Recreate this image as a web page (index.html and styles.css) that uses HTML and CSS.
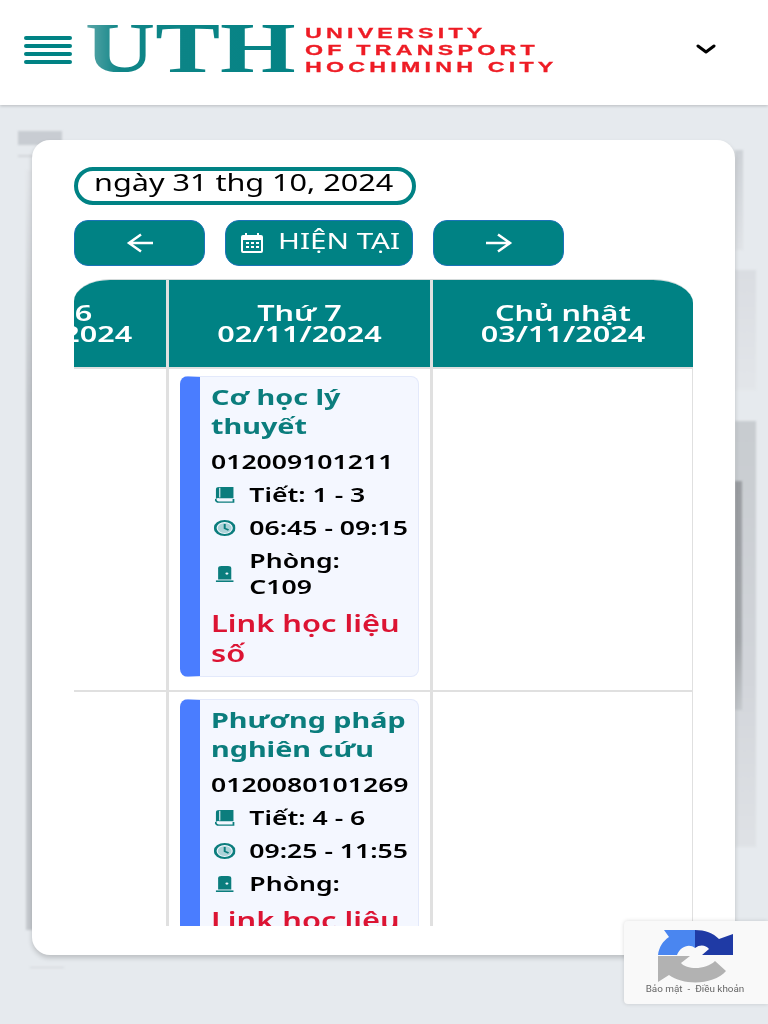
FILE: index.html
```html
<!DOCTYPE html>
<html>
<head>
<meta charset="UTF-8">
<title>Lịch học</title>
<link rel="stylesheet" href="styles.css">
</head>
<body>

<!-- thanh tren cung -->
<header class="topBar">
	<div class="menuBtn"><span></span><span></span><span></span><span></span></div>
	<div class="logo">
		<div class="logoMark">UTH</div>
		<div class="logoName">
			<div>UNIVERSITY</div>
			<div>OF TRANSPORT</div>
			<div>HOCHIMINH CITY</div>
		</div>
	</div>
	<svg class="chevron" width="20" height="10" viewBox="0 0 20 10"><path d="M2 2 L10 8 L18 2" fill="none" stroke="#000" stroke-width="3" stroke-linecap="round" stroke-linejoin="round"/></svg>
</header>

<!-- nen mo phia sau -->
<div class="blur blurA"></div>
<div class="blur blurB"></div>
<div class="blur blurC"></div>
<div class="blur blurD"></div>
<div class="blur blurE"></div>
<div class="blur blurF"></div>
<div class="blur blurG"></div>
<div class="blur blurH"></div>

<main class="panel">
	<div class="dateBox"><span class="dateText">ngày 31 thg 10, 2024</span></div>

	<div class="navRow">
		<button class="navBtn">
			<svg width="28" height="20" viewBox="0 0 28 20"><path d="M27 10 H3 M15 1.5 L3 10 L15 18.5" fill="none" stroke="#fff" stroke-width="2.5"/></svg>
		</button>
		<button class="navBtn todayBtn">
			<svg width="24" height="20" viewBox="0 0 24 20"><path fill="#fff" d="M5 0h2v2h10V0h2v2h2a2 2 0 0 1 2 2v14a2 2 0 0 1-2 2H3a2 2 0 0 1-2-2V4a2 2 0 0 1 2-2h2z"/><path fill="#008284" d="M3 7h18v11H3z"/><path fill="#fff" d="M6 9h3v2H6zM11 9h3v2h-3zM16 9h3v2h-3zM6 13h3v2H6zM11 13h3v2h-3zM16 13h3v2h-3z"/></svg>
			<span class="todayText">HIỆN TẠI</span>
		</button>
		<button class="navBtn">
			<svg width="28" height="20" viewBox="0 0 28 20"><path d="M1 10 H25 M13 1.5 L25 10 L13 18.5" fill="none" stroke="#fff" stroke-width="2.5"/></svg>
		</button>
	</div>

	<div class="tableWrap">
		<div class="week">
			<div class="dayHead"><div class="headText">Thứ 6<br>01/11/2024</div></div>
			<div class="dayHead"><div class="headText">Thứ 7<br>02/11/2024</div></div>
			<div class="dayHead lastCol"><div class="headText">Chủ nhật<br>03/11/2024</div></div>

			<div class="cell"></div>
			<div class="cell">
				<div class="lesson">
					<div class="lessonBody">
						<div class="subject">Cơ học lý<br>thuyết</div>
						<div class="code">012009101211</div>
						<div class="info">
							<svg class="ico" viewBox="0 0 20 20" preserveAspectRatio="none"><use href="#icoBook"/></svg>
							<span>Tiết: 1 - 3</span>
						</div>
						<div class="info">
							<svg class="ico" viewBox="0 0 20 20" preserveAspectRatio="none"><use href="#icoClock"/></svg>
							<span>06:45 - 09:15</span>
						</div>
						<div class="info">
							<svg class="ico" viewBox="0 0 20 20" preserveAspectRatio="none"><use href="#icoDoor"/></svg>
							<span>Phòng:<br>C109</span>
						</div>
						<div class="docLink">Link học liệu<br>số</div>
					</div>
				</div>
			</div>
			<div class="cell lastCol"></div>

			<div class="cell noLine"></div>
			<div class="cell noLine">
				<div class="lesson">
					<div class="lessonBody">
						<div class="subject">Phương pháp<br>nghiên cứu</div>
						<div class="code">0120080101269</div>
						<div class="info">
							<svg class="ico" viewBox="0 0 20 20" preserveAspectRatio="none"><use href="#icoBook"/></svg>
							<span>Tiết: 4 - 6</span>
						</div>
						<div class="info">
							<svg class="ico" viewBox="0 0 20 20" preserveAspectRatio="none"><use href="#icoClock"/></svg>
							<span>09:25 - 11:55</span>
						</div>
						<div class="info">
							<svg class="ico" viewBox="0 0 20 20" preserveAspectRatio="none"><use href="#icoDoor"/></svg>
							<span>Phòng:</span>
						</div>
						<div class="docLink">Link học liệu<br>số</div>
					</div>
				</div>
			</div>
			<div class="cell lastCol noLine"></div>
		</div>
	</div>
</main>

<!-- recaptcha -->
<div class="captcha">
	<svg class="captchaLogo" width="76" height="53" viewBox="0 0 76 53">
		<path fill="#4a86f0" d="M0 25 C1 17 5 11 11 7 L6 0 H37 V18 C31 13 22 17 19 25 Z"/>
		<path fill="#1f3aa5" d="M37 0 C47 0 55 3 61 9 L75 4 V25 H44 L51 19 C48 15 42 14 37 18 Z"/>
		<path fill="#b2b2b2" d="M0 26 H32 L23 33 C29 40 48 40 57 31 L68 41 C56 55 26 56 11 45 L0 52 Z"/>
	</svg>
	<div class="captchaText">Bảo mật &nbsp;-&nbsp; Điều khoản</div>
</div>

<svg class="iconDefs" width="0" height="0">
	<symbol id="icoBook" viewBox="0 0 20 20" preserveAspectRatio="none"><path fill="#0b7d7d" d="M5 0h13v14H5a3 3 0 0 0-3 1V3a3 3 0 0 1 3-3z"/><path fill="none" stroke="#0b7d7d" stroke-width="1.6" d="M2 15a3 3 0 0 0 3 4h13v-4"/><path fill="#f4f7ff" d="M5 1h1v12H5z"/></symbol>
	<symbol id="icoClock" viewBox="0 0 20 20" preserveAspectRatio="none"><circle cx="10" cy="10" r="10" fill="#0b7d7d"/><circle cx="10" cy="10" r="7.4" fill="#f4f7ff"/><circle cx="10" cy="10" r="6.4" fill="#0b7d7d" opacity=".3"/><path fill="none" stroke="#0b7d7d" stroke-width="1.8" d="M10 5v5.5l3.5 2"/></symbol>
	<symbol id="icoDoor" viewBox="0 0 20 20" preserveAspectRatio="none"><path fill="#0b7d7d" d="M4 17V3a3 3 0 0 1 3-3h6a3 3 0 0 1 3 3v14z"/><rect x="2" y="18" width="16" height="2" fill="#0b7d7d"/><circle cx="12" cy="9.5" r="1.4" fill="#f4f7ff"/></symbol>
</svg>

</body>
</html>
```

FILE: styles.css
```css
/* co ban */
html, body {
	margin: 0;
	padding: 0;
	width: 768px;
	height: 1024px;
	overflow: hidden;
}
body {
	position: relative;
	background: #e6eaee;
	font-family: "Noto Sans", sans-serif;
	color: #000;
}

/* thanh tren */
.topBar {
	display: flex;
	align-items: center;
	height: 105px;
	padding: 0 52px 10px 24px;
	box-sizing: border-box;
	background: #fff;
	box-shadow: 0 1px 3px rgba(0,0,0,.2);
	position: relative;
	z-index: 2;
}
.menuBtn {
	display: flex;
	flex-direction: column;
	gap: 4px;
	width: 48px;
	margin-top: 5px;
}
.menuBtn span {
	display: block;
	height: 4px;
	border-radius: 2px;
	background: #008284;
}
.logo {
	flex: 1;
	display: flex;
	align-items: center;
	gap: 10px;
	margin-left: 15px;
}
.logoMark {
	width: 208px;
	height: 48px;
	margin-left: -2px;
	margin-right: 2px;
	line-height: 48px;
	font-family: "Liberation Serif", serif;
	font-weight: bold;
	font-size: 71px;
	white-space: nowrap;
	transform: scaleX(1.37);
	transform-origin: left;
	background: linear-gradient(90deg, #5fa8aa 0%, #0f8587 12%, #008284 100%);
	-webkit-background-clip: text;
	background-clip: text;
	color: transparent;
}
.logoName {
	margin-top: 4px;
	font-family: "Liberation Sans", sans-serif;
	font-weight: bold;
	font-size: 15.5px;
	line-height: 17px;
	letter-spacing: 2.8px;
	-webkit-text-stroke: .3px #ee1c25;
	color: #ee1c25;
	transform: scaleX(1.5);
	transform-origin: left;
	white-space: nowrap;
}
.chevron {
	margin-top: 2px;
}

/* nen mo */
.blur {
	position: absolute;
	filter: blur(1px);
}
.blurA { left: 18px; top: 131px; width: 44px; height: 14px; background: #c8ccd2; }
.blurB { left: 26px; top: 170px; width: 8px; height: 760px; background: linear-gradient(#e3e6ea, #c5c9ce 30%, #c5c9ce 99%); }
.blurC { left: 735px; top: 150px; width: 8px; height: 100px; background: linear-gradient(#cdd1d6, #e0e3e7); }
.blurD { left: 735px; top: 270px; width: 21px; height: 120px; background: linear-gradient(#dadde2, #e3e6ea); }
.blurE { left: 735px; top: 421px; width: 21px; height: 426px; background: linear-gradient(#c8ccd0, #d2d5da 60%, #dfe2e6); }
.blurF { left: 735px; top: 481px; width: 7px; height: 229px; background: linear-gradient(#9a9da1, #a3a6aa 70%, #c4c8cc); }
.blurG { left: 18px; top: 155px; width: 16px; height: 2px; background: #d3d6da; }
.blurH { left: 30px; top: 967px; width: 34px; height: 1px; background: #d3d6da; }

/* khung chinh */
.panel {
	position: absolute;
	left: 32px;
	top: 140px;
	width: 703px;
	height: 815px;
	box-sizing: border-box;
	padding: 27px 42px 29px;
	background: #fff;
	border-radius: 18px;
	box-shadow: 0 3px 5px rgba(0,0,0,.18);
	display: flex;
	flex-direction: column;
	z-index: 1;
}
.dateBox {
	align-self: flex-start;
	width: 342px;
	height: 38px;
	box-sizing: border-box;
	border: 4px solid #008284;
	border-radius: 19px;
	padding-left: 16px;
	font-size: 23px;
	line-height: 22px;
	white-space: nowrap;
}
.dateText {
	display: inline-block;
	transform: scaleX(1.33);
	transform-origin: left;
}

/* nut */
.navRow {
	display: flex;
	gap: 20px;
	margin-top: 15px;
}
.navBtn {
	display: flex;
	align-items: center;
	justify-content: center;
	gap: 14px;
	width: 131px;
	height: 46px;
	padding: 0;
	border: 1px solid #1a73b8;
	border-radius: 14px;
	background: #008284;
	color: #fff;
	font-family: inherit;
	font-size: 21px;
}
.todayBtn {
	width: 188px;
}
.todayText {
	width: 121px;
	margin-bottom: 4px;
	text-align: left;
	white-space: nowrap;
	transform: scaleX(1.41);
	transform-origin: left;
}

/* bang */
.tableWrap {
	margin-top: 13px;
	flex: 1;
	min-height: 0;
	overflow: hidden;
	border-top: 1px solid #d3dada;
	border-radius: 36px 40px 0 0 / 22px 24px 0 0;
}
.week {
	display: grid;
	grid-template-columns: 235px 264px 260px;
	grid-template-rows: 89px 323px 323px;
	margin-left: -140px;
	width: 760px;
}
.dayHead {
	box-sizing: border-box;
	background: #008284;
	color: #fff;
	border-right: 3px solid #e0e0e0;
	border-bottom: 2px solid #e0e0e0;
	padding-top: 22px;
}
.dayHead.lastCol {
	border-right: none;
}
.headText {
	font-size: 22px;
	font-weight: 600;
	line-height: 21px;
	text-align: center;
	white-space: nowrap;
	transform: scaleX(1.39);
}
.cell {
	box-sizing: border-box;
	border-right: 3px solid #e0e0e0;
	border-bottom: 2px solid #e0e0e0;
	padding: 7px 11px 0 11px;
}
.cell.lastCol {
	border-right: 1px solid #e0e0e0;
}
.cell.noLine {
	border-bottom: none;
}

/* the mon hoc */
.lesson {
	box-sizing: border-box;
	width: 239px;
	height: 301px;
	background: #f4f7ff;
	border: 1px solid #e3e9fb;
	border-left: 20px solid #4a7dff;
	border-radius: 8px;
	padding: 6px 0 0 11px;
}
.lessonBody {
	width: 150px;
	transform: scaleX(1.37);
	transform-origin: left;
	white-space: nowrap;
}
.subject {
	font-size: 21px;
	font-weight: 700;
	line-height: 29px;
	color: #0b7d7d;
}
.code {
	font-size: 19.4px;
	font-weight: 600;
	line-height: 26px;
	margin-top: 8px;
}
.info {
	display: flex;
	align-items: center;
	gap: 10px;
	margin-top: 7px;
	font-size: 19.4px;
	font-weight: 600;
	line-height: 26px;
}
.ico {
	width: 16px;
	height: 16px;
	margin-left: 2px;
	flex: none;
}
.docLink {
	margin-top: 9px;
	font-size: 22.5px;
	font-weight: 600;
	line-height: 30px;
	color: #dc1433;
}
.iconDefs {
	position: absolute;
}

/* recaptcha */
.captcha {
	position: absolute;
	left: 624px;
	top: 921px;
	width: 144px;
	height: 83px;
	background: #f9f9f9;
	border-radius: 4px 0 0 4px;
	box-shadow: 0 0 4px rgba(0,0,0,.15);
	z-index: 3;
	text-align: center;
}
.captchaLogo {
	display: block;
	margin: 9px 0 0 34px;
}
.captchaText {
	font-size: 9px;
	font-family: "Roboto", sans-serif;
	color: #666;
	margin-top: 1px;
	transform: scaleX(1.1);
	white-space: nowrap;
	margin-left: -2px;
}
```
